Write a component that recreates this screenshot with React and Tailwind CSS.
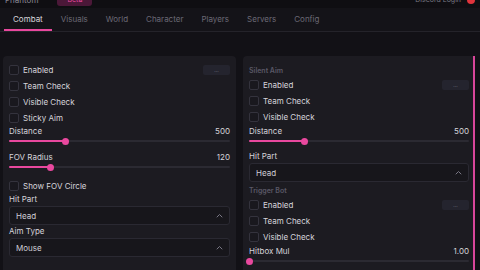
import React from "react";

const PINK = "#e9489e";

const Check = ({ label, bind }) => (
  <div className="h-[16px] flex items-center">
    <div className="w-[10px] h-[10px] rounded-[2px] border border-[#34333d] bg-[#19181e]" />
    <span className="ml-[4px] text-[8px] text-[#d6d4da]">{label}</span>
    {bind && (
      <div className="ml-auto w-[27px] h-[10px] rounded-[2px] bg-[#24242e] flex items-center justify-center text-[5px] text-[#6b6a78] leading-none">
        ...
      </div>
    )}
  </div>
);

const Slider = ({ label, value, pct, className = "" }) => (
  <div className={className}>
    <div className="h-[10px] flex items-center justify-between text-[8px] text-[#d6d4da]">
      <span>{label}</span>
      <span>{value}</span>
    </div>
    <div className="h-[10px] relative flex items-center">
      <div className="w-full h-[2px] rounded-full bg-[#2b2a32]" />
      <div
        className="absolute left-0 h-[2px] rounded-full bg-[#e9489e]"
        style={{ width: `${pct}%` }}
      />
      <div
        className="absolute w-[7px] h-[7px] rounded-full bg-[#e9489e] -ml-[3.5px]"
        style={{ left: `${pct}%` }}
      />
    </div>
  </div>
);

const Label = ({ children, className = "" }) => (
  <div className={`h-[10px] flex items-center text-[8px] text-[#d6d4da] ${className}`}>{children}</div>
);

const Dropdown = ({ value, className = "" }) => (
  <div
    className={`h-[19px] rounded-[3px] border border-[#2a2932] bg-[#17161b] flex items-center px-[6px] ${className}`}
  >
    <span className="text-[8px] text-[#d0ced6]">{value}</span>
    <svg className="ml-auto" width="7" height="5" viewBox="0 0 7 5" fill="none">
      <path d="M1 4 L3.5 1.5 L6 4" stroke="#7a7885" strokeWidth="1" strokeLinecap="round" />
    </svg>
  </div>
);

const Section = ({ children, className = "" }) => (
  <div className={`h-[12px] flex items-center text-[7px] font-semibold text-[#5a5866] ${className}`}>
    {children}
  </div>
);

export default function App() {
  const tabs = ["Combat", "Visuals", "World", "Character", "Players", "Servers", "Config"];
  return (
    <div
      className="w-[480px] h-[270px] overflow-hidden bg-[#121116]"
      style={{ fontFamily: "Inter, 'Noto Sans', sans-serif" }}
    >
      <div className="h-[16px] -mt-[8px] bg-[#0f0e12] flex items-center px-[5px]">
        <span className="text-[8px] text-[#8a8894]">Phantom</span>
        <span className="ml-[19px] h-[12px] px-[10px] rounded-[3px] bg-[#4b1838] text-[7px] text-[#e9489e] flex items-center">
          Beta
        </span>
        <span className="ml-auto text-[7px] text-[#7a7884]">Discord Login</span>
        <span className="ml-[6px] w-[8px] h-[8px] rounded-full bg-[#e0343c]" />
      </div>
      <div className="h-[24px] bg-[#141318] border-b border-[#24232a] flex items-end pl-[4px]">
        {tabs.map((t, i) => (
          <div
            key={t}
            className={`h-[23px] px-[9px] flex items-center text-[8px] ${
              i === 0 ? "text-[#d8d6dc] border-b-2 border-[#e9489e]" : "text-[#6b6975] border-b-2 border-transparent"
            }`}
          >
            {t}
          </div>
        ))}
      </div>
      <div className="grid grid-cols-[233px_232px] gap-[7px] pl-[3px] pt-[24px]">
        <div className="h-[220px] rounded-[4px] bg-[#1c1b21] px-[6px] pt-[6px]">
          <Check label="Enabled" bind />
          <Check label="Team Check" />
          <Check label="Visible Check" />
          <Check label="Sticky Aim" />
          <Slider label="Distance" value="500" pct={25.5} />
          <Slider label="FOV Radius" value="120" pct={18.6} className="mt-[6px]" />
          <div className="mt-[6px]">
            <Check label="Show FOV Circle" />
          </div>
          <Label>Hit Part</Label>
          <Dropdown value="Head" className="mt-[2px]" />
          <Label className="mt-[1px]">Aim Type</Label>
          <Dropdown value="Mouse" className="mt-[2px]" />
        </div>
        <div className="h-[220px] rounded-l-[4px] bg-[#1c1b21] pl-[6px] pr-[4px] pt-[6px] border-r-2 border-[#d8469a]">
          <Section className="mt-[3px]">Silent Aim</Section>
          <Check label="Enabled" bind />
          <Check label="Team Check" />
          <Check label="Visible Check" />
          <Slider label="Distance" value="500" pct={25} className="mt-[1px]" />
          <Label className="mt-[5px]">Hit Part</Label>
          <Dropdown value="Head" className="mt-[2px]" />
          <Section className="mt-[3px]">Trigger Bot</Section>
          <Check label="Enabled" bind />
          <Check label="Team Check" />
          <Check label="Visible Check" />
          <Slider label="Hitbox Mul" value="1.00" pct={0} className="mt-[1px]" />
        </div>
      </div>
    </div>
  );
}
